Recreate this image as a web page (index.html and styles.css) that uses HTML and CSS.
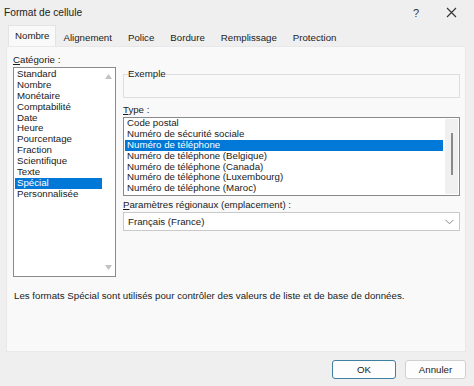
FILE: index.html
```html
<!DOCTYPE html>
<html lang="fr">
<head>
<meta charset="UTF-8">
<title>Format de cellule</title>
<link rel="stylesheet" href="styles.css">
</head>
<body>
<div class="dialog">
  <div class="titlebar">
    <span class="title">Format de cellule</span>
    <span class="help">?</span>
    <svg class="close" width="11" height="11" viewBox="0 0 11 11"><path d="M1 1L10 10M10 1L1 10" stroke="#333" stroke-width="1.1"/></svg>
  </div>

  <div class="tabs">
    <span class="tab active">Nombre</span>
    <span class="tab">Alignement</span>
    <span class="tab">Police</span>
    <span class="tab">Bordure</span>
    <span class="tab">Remplissage</span>
    <span class="tab">Protection</span>
  </div>

  <div class="panel">
    <div class="columns">
      <div class="left">
        <div class="label"><u>C</u>atégorie :</div>
        <div class="listbox category">
          <ul>
            <li>Standard</li>
            <li>Nombre</li>
            <li>Monétaire</li>
            <li>Comptabilité</li>
            <li>Date</li>
            <li>Heure</li>
            <li>Pourcentage</li>
            <li>Fraction</li>
            <li>Scientifique</li>
            <li>Texte</li>
            <li class="selected">Spécial</li>
            <li>Personnalisée</li>
          </ul>
          <div class="vscroll">
            <svg width="7" height="5" viewBox="0 0 7 5"><path d="M0 5L3.5 0L7 5Z" fill="#c2c2c2"/></svg>
            <svg width="7" height="5" viewBox="0 0 7 5"><path d="M0 0L3.5 5L7 0Z" fill="#c2c2c2"/></svg>
          </div>
        </div>
      </div>

      <div class="right">
        <fieldset class="sample">
          <legend>Exemple</legend>
        </fieldset>

        <div class="label"><u>T</u>ype :</div>
        <div class="listbox types">
          <ul>
            <li>Code postal</li>
            <li>Numéro de sécurité sociale</li>
            <li class="selected">Numéro de téléphone</li>
            <li>Numéro de téléphone (Belgique)</li>
            <li>Numéro de téléphone (Canada)</li>
            <li>Numéro de téléphone (Luxembourg)</li>
            <li>Numéro de téléphone (Maroc)</li>
          </ul>
          <div class="track"><span class="thumb"></span></div>
        </div>

        <div class="label"><u>P</u>aramètres régionaux (emplacement) :</div>
        <div class="combo">
          <span>Français (France)</span>
          <svg width="9" height="6" viewBox="0 0 9 6"><path d="M0.5 0.8L4.5 4.8L8.5 0.8" fill="none" stroke="#888" stroke-width="1"/></svg>
        </div>
      </div>
    </div>

    <p class="note">Les formats Spécial sont utilisés pour contrôler des valeurs de liste et de base de données.</p>
  </div>

  <div class="buttons">
    <button class="default">OK</button>
    <button>Annuler</button>
  </div>
</div>
</body>
</html>
```

FILE: styles.css
```css
body {
  margin: 0;
  background: #efefef;
  font-family: "Liberation Sans", Arial, sans-serif;
  font-size: 9.7px;
  color: #1a1a1a;
}

.dialog {
  width: 474px;
  height: 386px;
  background: #efefef;
  display: flex;
  flex-direction: column;
}

.titlebar {
  height: 25px;
  display: flex;
  align-items: center;
  padding: 0 17px 0 4px;
  box-sizing: border-box;
}

.title {
  flex: 1;
  font-size: 10.2px;
  color: #222;
}

.help {
  font-size: 11px;
  margin-right: 27px;
  color: #333;
}

.tabs {
  display: flex;
  height: 21px;
  margin-left: 8px;
  align-items: flex-end;
}

.tab {
  padding: 0 7px;
  height: 17px;
  line-height: 18px;
  margin-right: 2px;
  color: #222;
}

.tab.active {
  background: #f9f9f9;
  height: 20px;
  line-height: 20px;
  padding: 0 6px;
  margin-right: 0;
  border: 1px solid #e3e3e3;
  border-bottom: none;
}

.panel {
  margin: 0 8px 0 6px;
  height: 306px;
  background: #f9f9f9;
  border: 1px solid #e8e8e8;
  box-sizing: border-box;
  padding: 7px 5px 0 6px;
}

.columns {
  display: flex;
  gap: 7px;
}

.left {
  width: 103px;
}

.right {
  flex: 1;
  padding-top: 15px;
}

.label {
  line-height: 12px;
  height: 13px;
}

.listbox {
  background: #fff;
  border: 1px solid #8a8a8a;
  box-sizing: border-box;
  display: flex;
}

.listbox ul {
  list-style: none;
  margin: 0;
  padding: 1px 0 0 1px;
  flex: 1;
}

.listbox li {
  line-height: 10.9px;
  height: 10.9px;
  padding-left: 2px;
  white-space: nowrap;
}

.listbox li.selected {
  background: #0078d7;
  color: #fff;
}

.category {
  height: 210px;
}

.vscroll {
  width: 13px;
  display: flex;
  flex-direction: column;
  justify-content: space-between;
  align-items: center;
  padding: 6px 0;
}

.sample {
  margin: 0;
  height: 29px;
  box-sizing: border-box;
  border: 1px solid #dedede;
  padding: 0 4px;
}

.sample legend {
  padding: 0;
  line-height: 10px;
}

.sample + .label {
  margin-top: 6px;
}

.types {
  height: 79px;
}

.types ul {
  padding-top: 0;
}

.types li.selected {
  margin-right: 2px;
}

.track {
  width: 13px;
  background: #f0f0f0;
  margin: 1px 1px 1px 0;
  display: flex;
  justify-content: center;
  padding-top: 14px;
}

.thumb {
  width: 2px;
  height: 42px;
  background: #8a8a8a;
}

.types + .label {
  margin-top: 3px;
}

.combo {
  height: 19px;
  background: #fff;
  border: 1px solid #c9c9c9;
  box-sizing: border-box;
  display: flex;
  align-items: center;
  justify-content: space-between;
  padding: 0 5px 0 4px;
}

.note {
  margin: 13px 0 0 1px;
  line-height: 12px;
}

.buttons {
  display: flex;
  justify-content: flex-end;
  gap: 9px;
  padding: 8px 8px 0 0;
}

.buttons button {
  width: 61px;
  height: 19px;
  font-family: inherit;
  font-size: 9.7px;
  color: #222;
  background: #fdfdfd;
  border: 1px solid #d0d0d0;
  border-radius: 3px;
  padding: 0;
}

.buttons button.default {
  width: 64px;
  border: 1px solid #3f7f9f;
}
```
